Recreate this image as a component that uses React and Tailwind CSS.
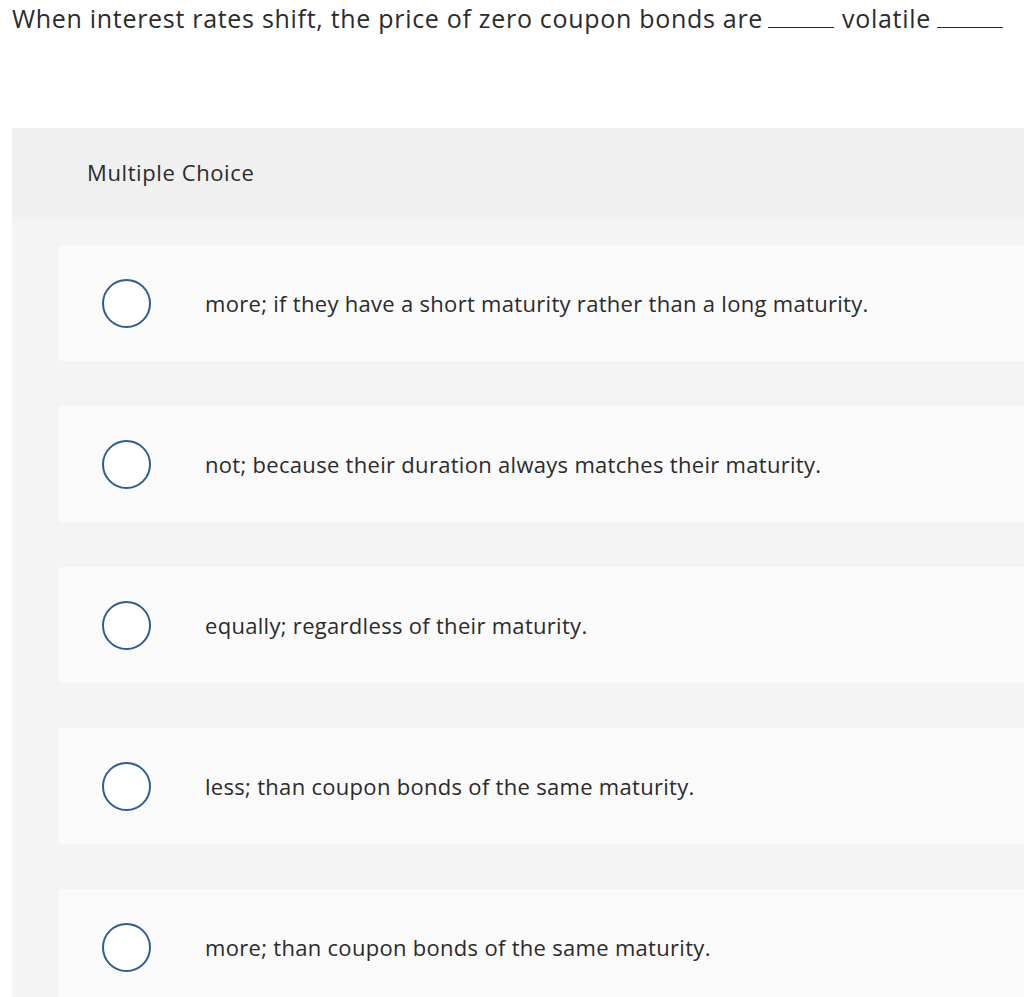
const options = [
  'more; if they have a short maturity rather than a long maturity.',
  'not; because their duration always matches their maturity.',
  'equally; regardless of their maturity.',
  'less; than coupon bonds of the same maturity.',
  'more; than coupon bonds of the same maturity.',
];

function Radio() {
  return (
    <span className="block h-[49px] w-[49px] shrink-0 rounded-full border-2 border-[#2f5d91] bg-white" />
  );
}

export default function App() {
  return (
    <div className="h-[997px] w-[1024px] overflow-hidden bg-white text-[#2b2b2b]" style={{ fontFamily: '"Open Sans", Lato, sans-serif' }}>
      <div className="pl-[12px] text-[25px] leading-[36px] tracking-[0.7px] whitespace-nowrap">
        When interest rates shift, the price of zero coupon bonds are
        <span className="ml-[5px] inline-block w-[66px] border-b-[1.5px] border-[#2b2b2b] align-baseline" />
        <span className="ml-[8px]">volatile</span>
        <span className="ml-[6px] inline-block w-[66px] border-b-[1.5px] border-[#2b2b2b] align-baseline" />
      </div>

      <div className="ml-[12px] mt-[92px] w-[1100px]">
        <div className="flex h-[89px] items-center bg-[#f0f0f0] pl-[75px] text-[22px] tracking-[0.6px]">Multiple Choice</div>
        <div className="flex flex-col gap-[45px] bg-[#f4f4f4] pl-[46px] pt-[28px] pb-[40px]">
          {options.map((o) => (
            <div key={o} className="flex h-[116px] items-center rounded-l-[4px] bg-[#fafafa] pl-[44px]">
              <Radio />
              <span className="ml-[54px] text-[22px] tracking-[0.3px]">{o}</span>
            </div>
          ))}
        </div>
      </div>
    </div>
  );
}
